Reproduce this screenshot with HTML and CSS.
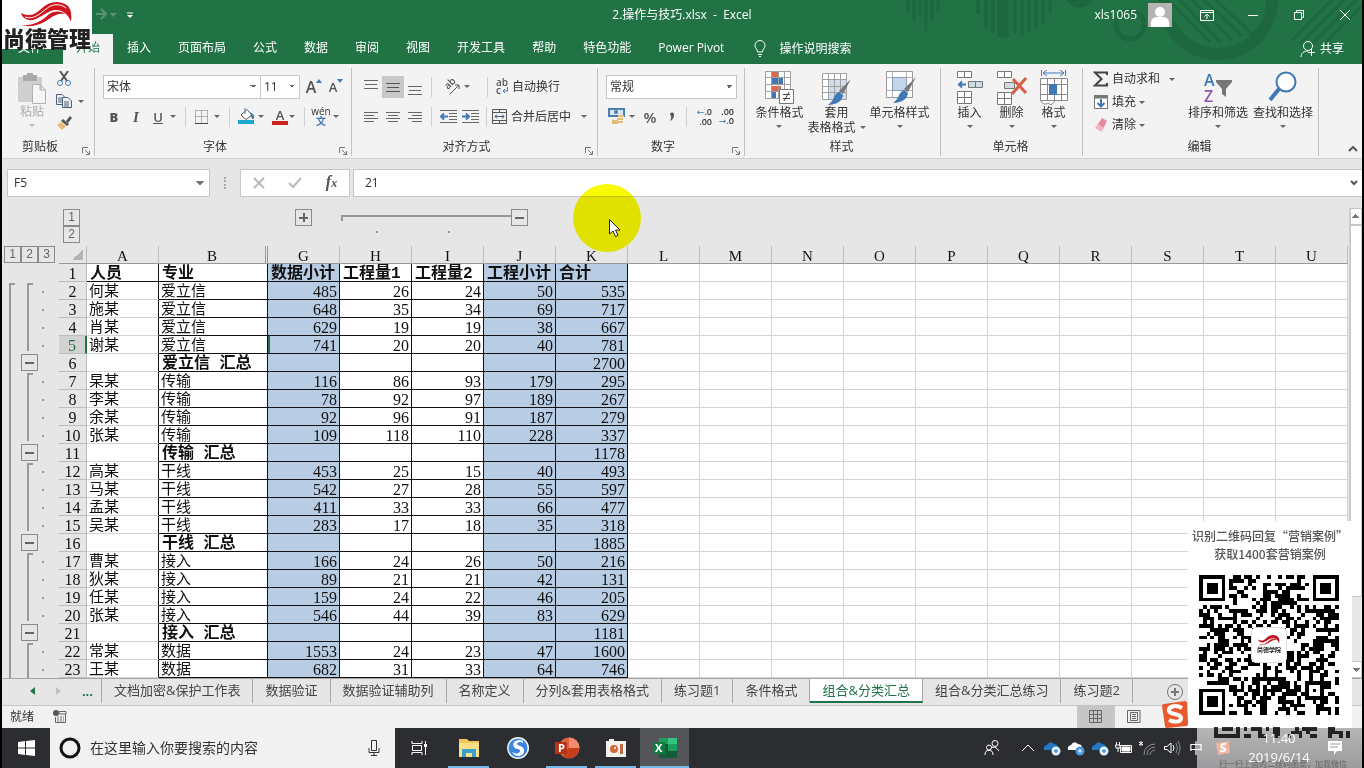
FILE: index.html
```
<!DOCTYPE html>
<html lang="zh-CN">
<head>
    <meta charset="UTF-8">
    <meta name="viewport" content="width=device-width, initial-scale=1.0">
    <title>2.操作与技巧.xlsx - Excel</title>
    <link rel="stylesheet" href="styles.css">
</head>
<body>
    <!-- Title bar and ribbon tabs -->
    <header class="top">
        <svg class="top-pattern" width="560" height="64" viewBox="0 0 560 64" fill="none" stroke="#1d683f">
            <path d="M106 0V14M112 0V22M118 0V16M124 0V31M130 0V22M136 0V12" stroke-width="3"/>
            <path d="M176 0V14M184 0V28M191 0V33" stroke-width="4"/>
            <path d="M201 0V37" stroke-width="11"/>
            <path d="M213 0V34M220 0V36M227 0V32M234 0V29M241 0V24M248 0V14" stroke-width="3"/>
            <path d="M264 0Q277 15 291 0Z" fill="#1d683f"/>
            <circle cx="328" cy="25" r="14" stroke-width="5"/>
            <circle cx="416" cy="0" r="54" stroke-width="12"/>
            <path d="M370 4L408 42M378 0L418 42M390 0L430 40M402 0L440 36M414 0L450 34" stroke-width="3"/>
            <path d="M490 40L530 0M498 44L542 0M510 44L554 0M522 44L560 6" stroke-width="3"/>
        </svg>

        <div class="titlebar">
            <div class="quick-access">
                <svg width="24" height="16" viewBox="0 0 24 16" fill="none" stroke="#5b9673" stroke-width="2"><path d="M0 7H9M5 2L10 7L5 12"/><path d="M14 6H21L17 10Z" fill="#5b9673" stroke="none"/></svg>
                <svg width="12" height="16" viewBox="0 0 12 16"><path d="M3 6H9" stroke="#fff"/><path d="M3 8H9L6 11Z" fill="#fff"/></svg>
            </div>
            <div class="title">2.操作与技巧.xlsx &nbsp;- &nbsp;Excel</div>
            <div class="window-tools">
                <span class="account">xls1065</span>
                <svg width="24" height="24" viewBox="0 0 24 24"><path d="M0 0H24V24H0Z" fill="#b5b3b4"/><circle cx="12" cy="9" r="5" fill="#fff"/><path d="M3 24V20Q3 14 9 14H15Q21 14 21 20V24Z" fill="#fff"/></svg>
                <button class="win-btn first" aria-label="功能区显示选项"><svg width="14" height="12" viewBox="0 0 14 12" fill="none" stroke="#fff"><path d="M.5 1.5H13.5V11.5H.5ZM.5 3.5H13.5M7 10V5M4.500 7.500L7 5L9.500 7.500"/></svg></button>
                <button class="win-btn" aria-label="最小化"><svg width="12" height="12"><path d="M1 6.500H11" stroke="#fff"/></svg></button>
                <button class="win-btn" aria-label="还原"><svg width="12" height="12" fill="none" stroke="#fff"><path d="M1.500 3.500H8.500V10.500H1.500ZM3.500 3V1.500H10.500V8.500H9"/></svg></button>
                <button class="win-btn" aria-label="关闭"><svg width="12" height="12" stroke="#fff"><path d="M1 1L11 11M11 1L1 11"/></svg></button>
            </div>
        </div>

        <nav class="ribbon-tabs">
            <a href="#" class="file">文件</a>
            <a href="#" class="active">开始</a>
            <a href="#">插入</a>
            <a href="#">页面布局</a>
            <a href="#">公式</a>
            <a href="#">数据</a>
            <a href="#">审阅</a>
            <a href="#">视图</a>
            <a href="#">开发工具</a>
            <a href="#">帮助</a>
            <a href="#">特色功能</a>
            <a href="#">Power Pivot</a>
            <a href="#" class="tell-me"><svg width="14" height="18" viewBox="0 0 14 18" fill="none" stroke="#fff"><path d="M4.500 12C4.500 9 2 8.500 2 5.500A5 5 0 0 1 12 5.500C12 8.500 9.500 9 9.500 12ZM5 14.500H9M6 16.500H8"/></svg>操作说明搜索</a>
            <a href="#" class="share"><svg width="16" height="18" viewBox="0 0 16 18" fill="none" stroke="#fff"><circle cx="8" cy="6" r="4.500"/><path d="M1 17C1 13 4 11 8 11M11.500 9V16M8 12.500H15"/></svg>共享</a>
        </nav>
    </header>

    <!-- Ribbon -->
    <section class="ribbon">
        <div class="group clipboard">
            <div class="group-body">
                <button class="big paste"><svg width="30" height="32" viewBox="0 0 30 32"><path d="M1 4H25V29H1Z" fill="#cfcfcf"/><path d="M6 2H20V8H6Z" fill="#a9a9a9"/><path d="M10 0H16V3H10Z" fill="#a9a9a9"/><path d="M15.500 11.500H23L28.500 17V30.500H15.500ZM23 11.500V17H28.500" fill="#f6f6f6" stroke="#b0b0b0"/></svg><span>粘贴</span><i class="caret"></i></button>
                <div class="stack">
                    <button class="tool" aria-label="剪切"><svg width="16" height="16" viewBox="0 0 16 16" fill="none"><path d="M4 0L11 10M12 0L5 10" stroke="#555" stroke-width="2"/><circle cx="4" cy="12" r="2.500" stroke="#3f78b5"/><circle cx="12" cy="12" r="2.500" stroke="#3f78b5"/></svg></button>
                    <button class="tool wide" aria-label="复制"><svg width="16" height="14" viewBox="0 0 16 14" fill="#f3f3f3" stroke="#4b6078"><path d="M.5.5H6L8.500 3V10.500H.5ZM2 4H6M2 6H6M2 8H6"/><path d="M6.500 3.500H12L15.500 7V13.500H6.500ZM8 8H13M8 10H13M8 12H13"/></svg><i class="caret"></i></button>
                    <button class="tool" aria-label="格式刷"><svg width="17" height="15" viewBox="0 0 17 15"><path d="M10 5L14 0L16 2L12 7Z" fill="#555"/><path d="M7 3L13 8L11 10L5 5Z" fill="#555"/><path d="M5 6L10 10L6 14L1 9Z" fill="#e6bd78"/></svg></button>
                </div>
            </div>
            <div class="group-label">剪贴板<svg class="launcher" width="8" height="8"><path d="M.5 6V.5H6M3 3L7 7M7.500 4V7.500H4" fill="none" stroke="#777"/></svg></div>
        </div>

        <div class="group font">
            <div class="group-body rows">
                <div class="line">
                    <select class="font-name" aria-label="字体"><option>宋体</option></select>
                    <select class="font-size" aria-label="字号"><option>11</option></select>
                    <button class="tool glyph grow" aria-label="增大字号">A<svg width="6" height="4"><path d="M0 4L3 0L6 4Z" fill="#3f78b5"/></svg></button>
                    <button class="tool glyph grow small" aria-label="减小字号">A<svg width="6" height="4"><path d="M0 0H6L3 4Z" fill="#3f78b5"/></svg></button>
                </div>
                <div class="line">
                    <button class="tool glyph"><b>B</b></button>
                    <button class="tool glyph italic">I</button>
                    <button class="tool glyph"><u>U</u></button><i class="caret"></i>
                    <span class="sep"></span>
                    <button class="tool" aria-label="边框"><svg width="14" height="14" fill="none" stroke="#777" stroke-dasharray="1 1"><path d="M.5.5V13M6.500.5V13M12.500.5V13M.5.5H13M.5 6.500H13"/><path d="M0 13.500H13" stroke="#444" stroke-dasharray="none"/></svg></button><i class="caret"></i>
                    <span class="sep"></span>
                    <button class="tool" aria-label="填充颜色"><svg width="17" height="17" viewBox="0 0 17 17"><path d="M3 7L9 1.500L14 7L8 11.500Z" fill="#fff" stroke="#555"/><path d="M7 0V6M12 5Q17 6 15 11Q13 9 13 6" stroke="#3f78b5" fill="#3f78b5"/><path d="M0 12H16V16H0Z" fill="#1ba8d0"/></svg></button><i class="caret"></i>
                    <button class="tool glyph font-color" aria-label="字体颜色">A</button><i class="caret"></i>
                    <span class="sep"></span>
                    <button class="tool phonetic"><span>wén</span><b>文</b></button><i class="caret"></i>
                </div>
            </div>
            <div class="group-label">字体<svg class="launcher" width="8" height="8"><path d="M.5 6V.5H6M3 3L7 7M7.500 4V7.500H4" fill="none" stroke="#777"/></svg></div>
        </div>

        <div class="group align">
            <div class="group-body rows">
                <div class="line">
                    <button class="tool" aria-label="顶端对齐"><svg width="14" height="16" stroke="#666"><path d="M0 1.500H14M1 5.500H13M0 9.500H14"/></svg></button>
                    <button class="tool on" aria-label="垂直居中"><svg width="14" height="16" stroke="#555"><path d="M0 4.500H14M1 8.500H13M0 12.500H14"/></svg></button>
                    <button class="tool" aria-label="底端对齐"><svg width="14" height="16" stroke="#666"><path d="M0 7.500H14M1 11.500H13M0 15.500H14"/></svg></button>
                    <span class="sep"></span>
                    <button class="tool turn" aria-label="方向"><svg width="18" height="16" viewBox="0 0 18 16" fill="none" stroke="#555"><text font-size="10" font-weight="600" fill="#555" stroke="none" transform="translate(5 11) rotate(-45)">ab</text><path d="M7 15L16 6M12 6H16V10"/></svg></button><i class="caret"></i>
                    <span class="sep after-turn"></span>
                    <button class="labelled"><svg width="14" height="18" viewBox="0 0 14 18"><text x="1" y="8" font-size="10" font-weight="600" fill="#555">ab</text><text x="1" y="16" font-size="10" font-weight="600" fill="#555">c</text><path d="M12.500 9V13H8M10 11L8 13L10 15" fill="none" stroke="#3f78b5"/></svg>自动换行</button>
                </div>
                <div class="line">
                    <button class="tool" aria-label="左对齐"><svg width="14" height="12" stroke="#666"><path d="M0 1.500H14M0 4.500H10M0 7.500H14M0 10.500H10"/></svg></button>
                    <button class="tool" aria-label="居中"><svg width="14" height="12" stroke="#666"><path d="M0 1.500H14M2 4.500H12M0 7.500H14M2 10.500H12"/></svg></button>
                    <button class="tool" aria-label="右对齐"><svg width="14" height="12" stroke="#666"><path d="M0 1.500H14M4 4.500H14M0 7.500H14M4 10.500H14"/></svg></button>
                    <span class="sep"></span>
                    <button class="tool" aria-label="减少缩进"><svg width="17" height="13" fill="none" stroke="#666"><path d="M0 .5H17M9 3.500H17M9 6.500H17M9 9.500H17M0 12.500H17"/><path d="M8 6.500H1M4 3.500L1 6.500L4 9.500" stroke="#3f78b5" stroke-width="2"/></svg></button>
                    <button class="tool" aria-label="增加缩进"><svg width="17" height="13" fill="none" stroke="#666"><path d="M0 .5H17M9 3.500H17M9 6.500H17M9 9.500H17M0 12.500H17"/><path d="M0 6.500H7M4 3.500L7 6.500L4 9.500" stroke="#3f78b5" stroke-width="2"/></svg></button>
                    <span class="sep"></span>
                    <button class="labelled"><svg width="16" height="16" fill="none" stroke="#555"><path d="M.5.5H14.500V14.500H.5ZM.5 3.500H14.500M.5 11.500H14.500M7.500.5V3.500M7.500 11.500V14.500"/><path d="M3 7.500H12M5 5.500L3 7.500L5 9.500M10 5.500L12 7.500L10 9.500" stroke="#41566d"/></svg>合并后居中</button><i class="caret far"></i>
                </div>
            </div>
            <div class="group-label">对齐方式<svg class="launcher" width="8" height="8"><path d="M.5 6V.5H6M3 3L7 7M7.500 4V7.500H4" fill="none" stroke="#777"/></svg></div>
        </div>

        <div class="group number">
            <div class="group-body rows">
                <div class="line">
                    <select class="format" aria-label="数字格式"><option>常规</option></select>
                </div>
                <div class="line">
                    <button class="tool" aria-label="会计数字格式"><svg width="18" height="17" viewBox="0 0 18 17"><path d="M1 1H16V8H1Z" fill="#d8e7f3" stroke="#4a7fae" stroke-width="2"/><circle cx="8" cy="4" r="2" fill="#4a7fae"/><path d="M10 7H16V9H10ZM9 10H15V12H9ZM4 12H10V16H4ZM10 13H15V15H10Z" fill="#e5bb72"/></svg></button><i class="caret"></i>
                    <button class="tool glyph percent">%</button>
                    <button class="tool glyph" aria-label="千位分隔样式"><svg width="6" height="10"><path d="M1 2A2 2 0 1 1 5 3Q5 7 1 9Q3 6 2 4Z" fill="#555"/></svg></button>
                    <span class="sep tight"></span>
                    <button class="tool decimals"><span><em>←</em>.0</span><span>.00</span></button>
                    <button class="tool decimals"><span>.00</span><span><em>→</em>.0</span></button>
                </div>
            </div>
            <div class="group-label">数字<svg class="launcher" width="8" height="8"><path d="M.5 6V.5H6M3 3L7 7M7.500 4V7.500H4" fill="none" stroke="#777"/></svg></div>
        </div>

        <div class="group styles">
            <div class="group-body">
                <button class="big"><svg width="32" height="36" viewBox="0 0 32 36"><path d="M2 1H28V29H2Z" fill="#fff"/><path d="M9 1H15V7H9Z" fill="#d9694a"/><path d="M9 8H20V14H9Z" fill="#3f78b5"/><path d="M9 16H18V21H9Z" fill="#d9694a"/><path d="M9 22H13V28H9Z" fill="#3f78b5"/><path d="M2.500 1.500H27.500V28.500H2.500ZM2.500 7.500H27.500M2.500 14.500H27.500M2.500 21.500H27.500M8.500 1.500V28.500M15.500 1.500V28.500M21.500 1.500V28.500" fill="none" stroke="#a0a0a0"/><path d="M16.500 19.500H30.500V33.500H16.500Z" fill="#fff" stroke="#777"/><path d="M20 24.500H27M20 28.500H27M26 22L21 31" stroke="#444"/></svg><span>条件格式</span><i class="caret"></i></button>
                <button class="big"><svg width="32" height="36" viewBox="0 0 32 36"><path d="M2.500 3.500H26.500V29.500H2.500Z" fill="#fff"/><path d="M9 10H26V29H9Z" fill="#cfdeea"/><path d="M2.500 3.500H26.500V29.500H2.500ZM2.500 9.500H26.500M2.500 16.500H26.500M2.500 22.500H26.500M8.500 3.500V29.500M14.500 3.500V29.500M20.500 3.500V29.500" fill="none" stroke="#a0a0a0"/><path d="M31 9L23 24L19 21L28 12Z" fill="#777"/><path d="M19 22L23 25Q22 34 8 35Q13 31 14 27Q16 23 19 22Z" fill="#3f78b5"/></svg><span>套用<br>表格格式<i class="caret"></i></span></button>
                <button class="big"><svg width="32" height="36" viewBox="0 0 32 36"><path d="M2.500 1.500H28.500V27.500H2.500Z" fill="#fff" stroke="#999"/><path d="M2.500 7.500H28.500M2.500 20.500H28.500M8.500 1.500V27.500M22.500 1.500V27.500" stroke="#b5b5b5"/><path d="M8.500 7.500H22.500V20.500H8.500Z" fill="#c5d5ea" stroke="#8d9db5"/><path d="M32 7L24 22L20 19L29 10Z" fill="#777"/><path d="M20 20L24 23Q23 32 9 33Q14 29 15 25Q17 21 20 20Z" fill="#3f78b5"/></svg><span>单元格样式</span><i class="caret"></i></button>
            </div>
            <div class="group-label">样式</div>
        </div>

        <div class="group cells">
            <div class="group-body">
                <button class="big"><svg width="28" height="36" viewBox="0 0 28 36" fill="#fff" stroke="#777"><path d="M1.500 1.500H15.500V7.500H1.500ZM8.500 1.500V7.500"/><path d="M12.500 11.500H26.500V17.500H12.500ZM19.500 11.500V17.500" fill="#cfdce6"/><path d="M1.500 21.500H15.500V33.500H1.500ZM8.500 21.500V33.500M1.500 27.500H15.500"/><path d="M10 14.500H3M6 11.500L3 14.500L6 17.500" fill="none" stroke="#3f78b5" stroke-width="2"/></svg><span>插入</span><i class="caret"></i></button>
                <button class="big"><svg width="32" height="36" viewBox="0 0 32 36" fill="#fff" stroke="#777"><path d="M1.500 1.500H15.500V7.500H1.500ZM8.500 1.500V7.500"/><path d="M8.500 12.500H18.500V18.500H8.500Z" fill="#cfdce6"/><path d="M1.500 22.500H15.500V34.500H1.500ZM8.500 22.500V34.500M1.500 28.500H15.500"/><path d="M17 9L30 23M30 8L16 24" stroke="#d75f45" stroke-width="3"/></svg><span>删除</span><i class="caret"></i></button>
                <button class="big"><svg width="30" height="36" viewBox="0 0 30 36" fill="#fff" stroke="#888"><path d="M1.500 8.500H28.500V30.500H1.500Z"/><path d="M8.500 8.500V30.500M15.500 8.500V30.500M22.500 8.500V30.500M1.500 14.500H28.500M1.500 24.500H28.500M2 31Q5 36 9 33L12 35L16 31"/><path d="M10 14H18V25H10Z" fill="#3f78b5" stroke="none"/><path d="M2.500 0V6M26.500 0V6M4 3H25M8 0L4 3L8 6M21 0L25 3L21 6" fill="none" stroke="#3f78b5"/></svg><span>格式</span><i class="caret"></i></button>
            </div>
            <div class="group-label">单元格</div>
        </div>

        <div class="group editing">
            <div class="group-body">
                <div class="stack text">
                    <button class="labelled sum"><svg width="16" height="16"><path d="M14 4V1.500H2L8.500 8L2 14.500H14V12" fill="none" stroke="#444" stroke-width="2"/></svg>自动求和<i class="caret"></i></button>
                    <button class="labelled"><svg width="16" height="16" fill="none"><path d="M1.500 1.500H14.500V14.500H1.500Z" fill="#fff" stroke="#777"/><path d="M1 3H15" stroke="#777" stroke-width="3"/><path d="M8 5V12M4.500 9L8 12.500L11.500 9" stroke="#3f78b5" stroke-width="2"/></svg>填充<i class="caret"></i></button>
                    <button class="labelled"><svg width="16" height="14"><path d="M9 0L14 3L9 13L3 9Z" fill="#e58b9d"/><path d="M5 6L11 10L8 14L2 10Z" fill="#f0b5bf"/></svg>清除<i class="caret"></i></button>
                </div>
                <button class="big"><svg width="30" height="36" viewBox="0 0 30 36"><text x="1" y="16" font-size="16" font-weight="600" fill="#3f78b5">A</text><text x="1" y="32" font-size="16" font-weight="600" fill="#9454a8">Z</text><path d="M13 10H29V12L23 19V27L19 24V19L13 12Z" fill="#777"/></svg><span>排序和筛选</span><i class="caret"></i></button>
                <button class="big"><svg width="30" height="36" viewBox="0 0 30 36" fill="none" stroke="#3f78b5"><circle cx="18" cy="12" r="9.500" stroke-width="2" fill="#fff"/><path d="M11 19L2 30" stroke-width="4"/></svg><span>查找和选择</span><i class="caret"></i></button>
            </div>
            <div class="group-label">编辑</div>
        </div>
        <button class="collapse" aria-label="折叠功能区"><svg width="10" height="6" fill="none" stroke="#555" stroke-width="2"><path d="M1 5L5 1L9 5"/></svg></button>
    </section>

    <!-- Formula bar -->
    <section class="formula-bar">
        <select class="name-box" aria-label="名称框"><option>F5</option></select>
        <span class="grip"></span>
        <div class="formula-buttons">
            <svg width="12" height="12" stroke="#b9b9b9" stroke-width="2"><path d="M1 1L11 11M11 1L1 11"/></svg>
            <svg width="14" height="12" fill="none" stroke="#b9b9b9" stroke-width="2"><path d="M1 6L5 10L13 1"/></svg>
            <span class="fx">f<small>x</small></span>
        </div>
        <div class="formula">
            <input aria-label="编辑栏" value="21">
            <svg width="8" height="6" fill="none" stroke="#555" stroke-width="2"><path d="M1 1L4 4L7 1"/></svg>
        </div>
    </section>

    <!-- Worksheet -->
    <main class="sheet">
        <div class="sheet-area">
            <div class="col-outline">
                <div class="levels"><button>1</button><button>2</button></div>
                <button class="toggle plus" aria-label="展开"></button>
                <div class="bracket"><i></i><i></i></div>
                <button class="toggle minus" aria-label="折叠"></button>
            </div>
            <div class="grid-wrap">
                <div class="row-outline">
                    <div class="levels"><button>1</button><button>2</button><button>3</button></div>
                    <div class="outline-body">
                        <div class="level-one"></div>
                        <div class="level-two" id="levelTwo"></div>
                        <div class="dots" id="dots"></div>
                    </div>
                </div>
                <table class="cells-table">
                    <colgroup><col class="c-row"><col><col class="c-b"></colgroup>
                    <thead id="head"></thead>
                    <tbody id="rows"></tbody>
                </table>
            </div>
        </div>
        <div class="scrollbar">
            <span class="up"></span>
            <span class="thumb"></span>
            <span class="down"></span>
        </div>
    </main>

    <!-- Sheet tabs -->
    <nav class="sheet-tabs">
        <span class="tab-nav"><i class="left"></i><i class="right"></i><b>...</b></span>
        <a href="#">文档加密&amp;保护工作表</a>
        <a href="#">数据验证</a>
        <a href="#">数据验证辅助列</a>
        <a href="#">名称定义</a>
        <a href="#">分列&amp;套用表格格式</a>
        <a href="#">练习题1</a>
        <a href="#">条件格式</a>
        <a href="#" class="active">组合&amp;分类汇总</a>
        <a href="#">组合&amp;分类汇总练习</a>
        <a href="#">练习题2</a>
        <button class="add-sheet" aria-label="新工作表"><svg width="16" height="16" fill="none" stroke="#777"><circle cx="8" cy="8" r="7.500"/><path d="M8 4V12M4 8H12" stroke-width="2"/></svg></button>
    </nav>

    <div class="status-bar">
        <span>就绪</span>
        <svg width="14" height="14" viewBox="0 0 14 14"><circle cx="3" cy="3" r="3" fill="#555"/><path d="M6 1.500H13V4H6ZM2.500 7V12.500H12.500V4" fill="none" stroke="#666"/><path d="M4 7H11M4 9H11M4 11H11" stroke="#777" stroke-dasharray="2 1"/></svg>
        <div class="views">
            <button class="on" aria-label="普通"><svg width="14" height="14" fill="none" stroke="#666"><path d="M.5.5H12.500V12.500H.5ZM4.500.5V12.500M8.500.5V12.500M.5 4.500H12.500M.5 8.500H12.500"/></svg></button>
            <button aria-label="页面布局"><svg width="14" height="14" fill="none" stroke="#666"><path d="M.5.5H13V12.500H.5ZM3.500 2.500H10.500V10.500H3.500ZM5 4.500H9M5 6.500H9M5 8.500H9"/></svg></button>
        </div>
    </div>

    <!-- Windows taskbar -->
    <footer class="taskbar">
        <button class="start" aria-label="开始"><svg width="17" height="16" fill="#fff"><path d="M0 2L7 1V7.500H0ZM8 1L17 0V7.500H8ZM0 8.500H7V15L0 14ZM8 8.500H17V16L8 15Z"/></svg></button>
        <label class="search">
            <svg width="22" height="22" fill="none" stroke="#111" stroke-width="3"><circle cx="11" cy="11" r="9"/></svg>
            <input type="text" placeholder="在这里输入你要搜索的内容" aria-label="搜索">
            <svg width="12" height="18" fill="none" stroke="#333"><path d="M3.500 1.500H8.500V11.500H3.500ZM1 9V13.500H11V9M6 14V17M3 16.500H9"/></svg>
        </label>
        <button class="task" aria-label="任务视图"><svg width="18" height="16" fill="none" stroke="#fff"><path d="M1 1V3.500H11V1M1 15V12.500H11V15M1.500 5.500H10.500V10.500H1.500ZM14.500 1V15"/><path d="M13 4H16V7H13Z" fill="#fff" stroke="none"/></svg></button>
        <button class="task open" aria-label="文件资源管理器"><svg width="22" height="20"><path d="M1 1H9L11 3H21V19H1Z" fill="#f0c85a"/><path d="M1 5H21V19H1Z" fill="#fbdf86"/><path d="M4 11H18V19H14V15H8V19H4Z" fill="#38a2cf"/></svg></button>
        <button class="task" aria-label="搜狗浏览器"><svg width="24" height="24"><circle cx="12" cy="12" r="11" fill="#f5f9fd"/><circle cx="12" cy="12" r="9.500" fill="#3d86dc"/><path d="M17 5C11 2 5 7 8 11C10 14 14 12 14 15C14 18 9 18 6 16C10 23 19 20 18 14C17 9 11 10 11 8C11 6 14 5 17 7Z" fill="#fff"/></svg></button>
        <button class="task open" aria-label="PowerPoint"><svg width="26" height="24"><circle cx="15" cy="12" r="10.500" fill="#e2603c"/><path d="M15 1.500A10.500 10.500 0 0 1 25.500 12H15Z" fill="#f18d6e"/><path d="M15 12H25A10 10 0 0 1 9 20Z" fill="#c43e1c"/><path d="M1 6H13V18H1Z" fill="#b83518"/><text x="4" y="16" font-size="11" font-weight="700" fill="#fff">P</text></svg></button>
        <button class="task open" aria-label="录屏"><svg width="22" height="20"><path d="M1 3H4V1H9V3H21V19H1Z" fill="#f3f1ed"/><circle cx="9" cy="11" r="4" fill="#d56835"/><circle cx="10" cy="10" r="1" fill="#fff"/><path d="M15 6H18V16H15Z" fill="#b96c45"/></svg></button>
        <button class="task open current" aria-label="Excel"><svg width="26" height="24"><path d="M7 2H25V22H7Z" fill="#1f9d5c"/><path d="M16 2H25V8H16Z" fill="#33c481"/><path d="M7 8H16V15H7ZM16 15H25V22H7V15Z" fill="#155c38"/><path d="M1 6H13V18H1Z" fill="#107c41"/><text x="3" y="16" font-size="11" font-weight="700" fill="#fff">X</text></svg></button>

        <div class="tray">
            <svg class="people" width="16" height="16" fill="none" stroke="#fff"><circle cx="11" cy="3.500" r="3"/><circle cx="5" cy="7.500" r="2.500"/><path d="M1 15Q1 10 5 10.500Q9 10 9 15M7 8Q11 5 15 11"/></svg>
            <svg width="24" height="16" fill="none" stroke="#fff"><path d="M6 11L12 5L18 11"/></svg>
            <svg width="24" height="16"><path d="M4 10Q3 6 7 5Q10 0 14 4Q19 4 18 10Z" fill="#2378c4"/><circle cx="16" cy="11" r="4.500" fill="#dceeff"/><path d="M14 11H18M16 9V13" stroke="#2378c4"/></svg>
            <svg width="24" height="16"><path d="M4 10Q3 6 7 5Q10 0 14 4Q19 4 18 10Z" fill="#fff"/><circle cx="16" cy="11" r="4.500" fill="#4b9ae0"/><path d="M14 11H18M16 9V13" stroke="#fff"/></svg>
            <svg width="24" height="16"><path d="M4 10Q3 6 7 5Q10 0 14 4Q19 4 18 10Z" fill="#2378c4"/><circle cx="16" cy="11" r="4.500" fill="#dceeff"/><path d="M14 11H18M16 9V13" stroke="#2378c4"/></svg>
            <svg width="24" height="16" fill="none" stroke="#fff"><path d="M8.500 5.500H19.500V12.500H8.500Z"/><path d="M10 7H18V11H10Z" fill="#fff"/><path d="M4.500 2V5M7.500 2V5M3.500 5H8V8H4ZM6 8V12"/></svg>
            <svg width="24" height="16" fill="none" stroke="#8a8c8f"><path d="M8 15Q8 5 19 4M11 15Q11 8 19 7M14 15Q14 11 19 10"/><path d="M5 1V6M3 2L7 5M7 2L3 5" stroke="#fff"/></svg>
            <svg width="24" height="16" fill="none" stroke="#fff"><path d="M4.500 6.500H7L11 3V13L7 9.500H4.500ZM13 5Q15 8 13 11"/><path d="M16 3Q19 8 16 13M18 1Q22 8 18 15" stroke="#8a8c8f"/></svg>
            <span class="ime">中</span>
        </div>
        <div class="clock">
            <svg width="16" height="16"><path d="M1 3L14 1L15 13L3 15Z" fill="#edb5a2"/><path d="M11 4C6 3 5 7 8 8C12 9 11 12 5 11" fill="none" stroke="#fff" stroke-width="2"/></svg>
            <div class="time">11:40<br>2019/6/14</div>
            <svg width="17" height="16"><path d="M1 1H15V11H10L7 15V11H1Z" fill="#fff"/><path d="M3 4H13M3 7H11" stroke="#999"/></svg>
            <p>扫一扫上面的二维码图案，加我微信</p>
        </div>
    </footer>

    <!-- Things floating above the window -->
    <div class="brand">
        <svg width="52" height="26" viewBox="0 0 52 26" fill="#cf1620"><path d="M0 12C8 16 14 14 20 8C27 1 36 -1 44 3C50 6 51 12 50 21C47 13 42 9 35 9C27 9 20 17 12 19C5 20 1 16 0 12Z"/><path d="M1 24C10 25 20 21 27 14C33 9 40 10 45 13C38 12 33 14 28 18C20 24 8 27 1 24Z"/><path d="M4 16C12 19 19 13 25 8C31 3 39 2 45 7" fill="none" stroke="#fff"/></svg>
        <strong>尚德管理</strong>
    </div>
    <svg class="sogou" width="28" height="28"><path d="M1 5Q1 3 3 3L24 0Q26 0 26 2L27 23Q27 25 25 25L6 27Q4 27 4 25Z" fill="#e8592f"/><path d="M21 7C14 3 7 6 8 10C9 14 20 12 20 17C20 22 12 21 8 19" fill="none" stroke="#fff" stroke-width="4"/></svg>
    <aside class="qr-card">
        <p>识别二维码回复“营销案例”<br>获取1400套营销案例</p>
        <div class="qr-box">
            <svg id="qr" class="qr" width="140" height="140" viewBox="0 0 37 37" shape-rendering="crispEdges"></svg>
            <div class="qr-logo">
                <svg width="22" height="12" viewBox="0 0 52 26" fill="#c41420"><path d="M0 12C8 16 14 14 20 8C27 1 36 -1 44 3C50 6 51 12 50 21C47 13 42 9 35 9C27 9 20 17 12 19C5 20 1 16 0 12Z"/><path d="M1 24C10 25 20 21 27 14C33 9 40 10 45 13C38 12 33 14 28 18C20 24 8 27 1 24Z"/></svg>
                <b>尚德学院</b>
            </div>
        </div>
    </aside>
    <svg id="qrStrip" class="qr-strip" width="136" height="11" viewBox="0 34 37 3" shape-rendering="crispEdges"></svg>
    <div class="spotlight"></div>
    <svg class="pointer" width="14" height="20"><path d="M1.500 1.500V16L5 13L7.500 18.500L10 17.500L7.500 12H12Z" fill="#fff" stroke="#222"/></svg>

    <script src="script.js"></script>
</body>
</html>
```
FILE: styles.css
```
* {
    margin: 0;
    padding: 0;
    box-sizing: border-box;
}
body {
    height: 100vh;
    display: flex;
    flex-direction: column;
    overflow: hidden;
    position: relative;
    border: solid #000;
    border-width: 0 2px;
    background: #e6e6e6;
    color: #333;
    font: 12px/16px "Open Sans", "Noto Sans CJK SC", sans-serif;
}
button, select, input {
    font: inherit;
    color: inherit;
    border: 0;
    border-radius: 0;
    background: none;
}
a {
    color: inherit;
    text-decoration: none;
    white-space: nowrap;
}
svg { flex-shrink: 0; }
select {
    appearance: none;
    border: 1px solid #c6c6c6;
    background: linear-gradient(45deg, transparent 50%, #666 50%) right 7px center / 3px 3px no-repeat,
                linear-gradient(-45deg, transparent 50%, #666 50%) right 4px center / 3px 3px no-repeat,
                #fff;
}
.caret {
    flex-shrink: 0;
    display: inline-block;
    border: solid transparent;
    border-width: 3px 3px 0;
    border-top-color: #666;
}

/* Title bar */
.top {
    position: relative;
    height: 64px;
    flex-shrink: 0;
    background: #217346;
    color: #fff;
    display: flex;
    flex-direction: column;
    justify-content: space-between;
    overflow: hidden;
}
.top-pattern {
    position: absolute;
    top: 0;
    right: 0;
}
.titlebar {
    position: relative;
    height: 30px;
    display: grid;
    grid-template-columns: 1fr auto 1fr;
    align-items: center;
}
.quick-access {
    display: flex;
    gap: 4px;
    padding-left: 94px;
}
.window-tools {
    display: flex;
    align-items: center;
    justify-content: flex-end;
    margin-right: -6px;
}
.account { margin-right: 11px; }
.win-btn {
    width: 46px;
    height: 28px;
    display: flex;
    align-items: center;
    justify-content: center;
}
.win-btn.first { margin-left: 12px; }
.ribbon-tabs {
    position: relative;
    display: flex;
    gap: 1px;
    height: 30px;
    line-height: 28px;
}
.ribbon-tabs a { padding: 0 13px; }
.ribbon-tabs .file { width: 60px; padding-left: 16px; }
.ribbon-tabs .active {
    background: #f3f3f3;
    color: #217346;
}
.ribbon-tabs .tell-me, .ribbon-tabs .share {
    display: flex;
    align-items: center;
    gap: 12px;
}
.ribbon-tabs .tell-me { padding-left: 15px; }
.ribbon-tabs .share {
    margin-left: auto;
    gap: 4px;
    padding-right: 18px;
}

/* Ribbon */
.ribbon {
    height: 95px;
    flex-shrink: 0;
    display: flex;
    padding: 4px 0 2px;
    background: #f3f3f3;
    border-bottom: 1px solid #cfcfcf;
}
.group {
    display: flex;
    flex-direction: column;
    flex-shrink: 0;
    border-right: 1px solid #c2c2c2;
    white-space: nowrap;
}
.clipboard { width: 93px; }
.font { width: 257px; }
.align { width: 246px; }
.number { width: 147px; }
.styles { width: 196px; }
.cells { width: 142px; }
.editing { width: 236px; }
.group-body {
    flex: 1;
    display: flex;
    justify-content: center;
}
.group-body.rows {
    flex-direction: column;
    justify-content: flex-start;
    gap: 5px;
    padding: 6px 0 0 8px;
}
.line {
    display: flex;
    align-items: center;
    height: 25px;
}
.group-label {
    position: relative;
    height: 17px;
    text-align: center;
    padding-right: 16px;
}
.styles .group-label, .cells .group-label, .editing .group-label { padding-right: 2px; }
.launcher {
    position: absolute;
    right: 4px;
    bottom: 1px;
}
.tool {
    width: 22px;
    height: 22px;
    flex-shrink: 0;
    display: flex;
    align-items: center;
    justify-content: center;
}
.tool.on { background: #c8c8c8; }
.tool.wide {
    width: 36px;
    justify-content: flex-start;
    gap: 6px;
    padding-left: 3px;
}
.glyph {
    font-size: 13px;
    font-weight: 600;
    color: #555;
}
.italic { font: italic bold 15px/16px "Liberation Serif", serif; }
.grow { font-size: 16px; }
.grow svg { align-self: flex-start; margin-top: 3px; }
.grow.small { font-size: 13px; }
.font-name { width: 158px; height: 24px; padding-left: 3px; }
.font-size { width: 39px; height: 24px; padding-left: 3px; border-left: 0; margin-right: 3px; }
.tool + .caret { margin: 0 4px 0 1px; }
.sep {
    width: 1px;
    height: 20px;
    background: #d0d0d0;
    margin: 0 5px;
}
.sep.tight { margin: 0 3px; }
.turn { margin-left: 4px; }
.sep.after-turn { margin: 0 7px 0 13px; }
.font-color {
    height: 17px;
    width: 16px;
    margin-left: 4px;
    border-bottom: 4px solid #c9211e;
}
.phonetic {
    flex-direction: column;
    line-height: 9px;
    font-size: 10px;
}
.phonetic b { line-height: 10px; color: #3f78b5; }
.labelled {
    display: flex;
    align-items: center;
    gap: 3px;
}
.caret.far { margin-left: 10px; }
.format { width: 131px; height: 24px; padding-left: 3px; }
.percent { font-size: 15px; }
.decimals {
    flex-direction: column;
    align-items: flex-end;
    font-size: 9px;
    line-height: 9px;
    font-weight: 600;
}
.decimals em {
    font: 9px/9px "DejaVu Sans", sans-serif;
    color: #3f78b5;
}
.stack {
    display: flex;
    flex-direction: column;
    width: 36px;
}
.stack.text {
    width: 90px;
    gap: 7px;
    padding-top: 3px;
}
.clipboard .group-body { padding-left: 10px; }
.big {
    display: flex;
    flex-direction: column;
    align-items: center;
    padding-top: 2px;
    line-height: 15px;
}
.big svg { margin-bottom: -1px; }
.big > .caret { margin-top: 5px; }
.big span .caret { margin: 0 0 3px 4px; }
.paste { color: #aaa; margin-right: 6px; padding-top: 5px; }
.paste .caret { border-top-color: #bbb; }
.sum .caret { margin-left: 6px; }
.styles .group-body { gap: 4px; }
.cells .big { width: 42px; }
.editing .group-body {
    justify-content: flex-start;
    gap: 5px;
    padding-left: 10px;
}
.collapse {
    margin-left: auto;
    align-self: flex-end;
    padding-right: 4px;
}

/* Formula bar */
.formula-bar {
    height: 49px;
    flex-shrink: 0;
    display: flex;
    align-items: center;
    padding: 0 0 2px 5px;
}
.name-box {
    width: 203px;
    height: 28px;
    padding-left: 6px;
    background: linear-gradient(45deg, transparent 50%, #777 50%) right 9px center / 4px 4px no-repeat,
                linear-gradient(-45deg, transparent 50%, #777 50%) right 5px center / 4px 4px no-repeat,
                #fff;
}
.grip {
    width: 2px;
    height: 12px;
    margin: 0 14px;
    border-left: 2px dotted #aaa;
}
.formula-buttons {
    display: flex;
    align-items: center;
    justify-content: space-around;
    width: 110px;
    height: 28px;
    border: 1px solid #c6c6c6;
    background: #fff;
}
.fx { font: italic bold 16px/20px "Liberation Serif", serif; color: #555; }
.fx small { font-size: 12px; }
.formula {
    flex: 1;
    min-width: 0;
    display: flex;
    align-items: center;
    height: 28px;
    margin-left: 3px;
    padding: 0 4px 0 11px;
    border: 1px solid #c6c6c6;
    border-right: 0;
    background: #fff;
}
.formula input { flex: 1; min-width: 0; }

/* Worksheet */
.sheet {
    flex: 1;
    min-height: 0;
    display: flex;
}
.sheet-area {
    flex: 1;
    min-width: 0;
    overflow: hidden;
    display: flex;
    flex-direction: column;
}
.col-outline {
    height: 38px;
    flex-shrink: 0;
    display: flex;
    padding: 1px 0 0 61px;
}
.levels { display: flex; }
.levels button, .toggle {
    width: 17px;
    height: 17px;
    flex-shrink: 0;
    border: 1px solid #8a8a8a;
    font: 12px/15px "Liberation Sans", sans-serif;
    color: #666;
}
.col-outline .levels { flex-direction: column; }
.toggle {
    display: block;
    background: linear-gradient(#666, #666) center / 9px 2px no-repeat;
}
.toggle.plus {
    margin-left: 215px;
    background: linear-gradient(#666, #666) center / 9px 2px no-repeat, linear-gradient(#666, #666) center / 2px 9px no-repeat;
}
.bracket {
    width: 170px;
    height: 6px;
    margin: 6px 0 0 29px;
    border: solid #999;
    border-width: 2px 0 0 2px;
    display: flex;
    gap: 70px;
    padding-left: 33px;
}
.bracket i { margin-top: 14px; }
.bracket i, .dots i::after {
    content: "";
    width: 2px;
    height: 2px;
    flex-shrink: 0;
    background: #999;
}
.grid-wrap { display: flex; }
.row-outline {
    width: 57px;
    flex-shrink: 0;
    padding-left: 2px;
}
.outline-body {
    display: flex;
    height: 415px;
    padding: 20px 0 0 5px;
}
.level-one {
    width: 6px;
    border: solid #999;
    border-width: 2px 0 0 2px;
}
.level-two { width: 21px; margin-left: 6px; }
.level-two i {
    display: block;
    width: 6px;
    height: 68px;
    margin-left: 6px;
    border: solid #999;
    border-width: 2px 0 0 2px;
}
.level-two .toggle { margin: 3px 0 2px; }
.dots i {
    height: 18px;
    width: 6px;
    display: flex;
    align-items: center;
}
.cells-table {
    width: 1289px;
    flex-shrink: 0;
    table-layout: fixed;
    border-spacing: 0;
    color: #111;
    font: 15px/15px "Liberation Serif", "Noto Sans CJK SC", serif;
}
.c-row { width: 28px; }
.c-b { width: 109px; }
.cells-table th, .cells-table td {
    height: 18px;
    border: solid #d4d4d4;
    border-width: 0 1px 1px 0;
    white-space: nowrap;
    overflow: hidden;
    padding: 2px 2px 0;
    background: #fff;
}
.cells-table th {
    background: #e6e6e6;
    border-color: #bdbdbd;
    font-weight: normal;
    font-size: 16px;
    text-align: center;
}
.cells-table thead th {
    border-bottom-color: #999;
    font-size: 15px;
    line-height: 13px;
    padding-top: 4px;
}
.cells-table thead th:first-child { background: linear-gradient(135deg, transparent 50%, #b4b4b4 50%) right 3px bottom 3px / 11px 11px no-repeat #e6e6e6; }
.cells-table thead th:nth-child(3) { border-right: 3px double #999; }
.cells-table td.box { border-color: #111; }
.cells-table td.name { border-right-color: #111; }
.cells-table td.num {
    text-align: right;
    font-size: 16px;
}
.cells-table td.sum { background: #b8cce4; }
.cells-table td.bold {
    font-family: "Liberation Mono", "Noto Sans CJK SC", monospace;
    font-weight: bold;
    font-size: 16px;
    line-height: 13px;
    padding: 4px 3px 0;
}
.cells-table .picked th {
    background: #d2d2d2;
    color: #217346;
    border-right: 2px solid #217346;
}
.cells-table .picked td.first-sum { box-shadow: inset 2px 0 #2a6b55; }
.scrollbar {
    width: 13px;
    display: flex;
    flex-direction: column;
    align-items: center;
    border-left: 1px solid #cfcfcf;
    background: #e8e8e8;
}
.scrollbar .up, .scrollbar .down {
    width: 12px;
    height: 17px;
    border: 1px solid #c6c6c6;
    background: linear-gradient(45deg, transparent 50%, #777 50%) 1px center / 4px 4px no-repeat, linear-gradient(-45deg, transparent 50%, #777 50%) 5px center / 4px 4px no-repeat, #fff;
}
.scrollbar .up { transform: rotate(180deg); }
.scrollbar .thumb {
    width: 12px;
    height: 372px;
    border: 1px solid #c6c6c6;
    background: #fff;
}
.scrollbar .down { margin-top: auto; }

/* Sheet tabs */
.sheet-tabs {
    height: 28px;
    flex-shrink: 0;
    display: flex;
    align-items: flex-start;
    border-top: 1px solid #a6a6a6;
    border-bottom: 1px solid #c6c6c6;
    font-size: 13px;
    line-height: 22px;
    color: #444;
}
.sheet-tabs a {
    height: 24px;
    padding: 0 12px;
    border-right: 1px solid #a6a6a6;
}
.sheet-tabs .active {
    background: #fff;
    color: #217346;
    border-bottom: 2px solid #217346;
}
.tab-nav {
    width: 100px;
    height: 24px;
    display: flex;
    align-items: center;
    justify-content: flex-end;
    gap: 21px;
    padding-right: 8px;
    border-right: 1px solid #a6a6a6;
    color: #217346;
}
.tab-nav i {
    border: solid transparent;
    border-width: 4px 5px 4px 0;
    border-right-color: #217346;
}
.tab-nav .right { border-width: 4px 0 4px 5px; border-left-color: #c0c0c0; }
.add-sheet { margin: 5px 0 0 34px; height: 16px; }
.status-bar {
    height: 22px;
    flex-shrink: 0;
    display: flex;
    align-items: center;
    gap: 19px;
    padding-left: 8px;
    background: #f1f1f1;
}
.views {
    display: flex;
    margin-left: auto;
    margin-right: 209px;
}
.views button {
    width: 38px;
    height: 22px;
    display: flex;
    align-items: center;
    justify-content: center;
}
.views .on { background: #c6c6c6; }

/* Taskbar */
.taskbar {
    height: 40px;
    flex-shrink: 0;
    display: flex;
    background: #2b2d31;
    color: #fff;
}
.start { width: 48px; display: flex; align-items: center; justify-content: center; }
.search {
    width: 345px;
    display: flex;
    align-items: center;
    gap: 9px;
    padding: 0 15px 0 9px;
    background: #f1f1f1;
    color: #333;
    font-size: 14px;
}
.search input { flex: 1; min-width: 0; }
.search input::placeholder { color: #333; opacity: 1; }
.task {
    width: 49px;
    display: flex;
    align-items: center;
    justify-content: center;
    border: solid transparent;
    border-width: 2px 0;
}
.open {
    width: 41px;
    margin: 0 4px;
    border-bottom-color: #76b9ed;
}
.current { width: 49px; margin: 0; background: #535558; border-top-color: #535558; }
.tray {
    position: relative;
    z-index: 1;
    margin: 0 -6px 0 auto;
    display: flex;
    align-items: center;
}
.people { margin-right: 16px; }
.ime { width: 14px; margin-left: 5px; font-size: 14px; }
.clock {
    position: relative;
    width: 165px;
    padding: 0 18px;
    display: flex;
    align-items: center;
    justify-content: space-between;
    background: linear-gradient(#b5b5b5, #9b9c9e);
}
.time {
    position: relative;
    z-index: 2;
    text-align: center;
    font-size: 13px;
    line-height: 19px;
}
.clock p {
    position: absolute;
    left: 22px;
    bottom: -4px;
    font-size: 8px;
    color: #666;
    white-space: nowrap;
}

/* Overlays */
.brand {
    position: absolute;
    top: 0;
    left: 0;
    width: 90px;
    height: 49px;
    padding-top: 1px;
    background: #fff;
    display: flex;
    flex-direction: column;
    align-items: center;
}
.brand strong {
    font-size: 22px;
    font-weight: 900;
    line-height: 22px;
    color: #222;
    white-space: nowrap;
}
.sogou {
    position: absolute;
    right: 173px;
    bottom: 39px;
}
.qr-card {
    position: absolute;
    right: 10px;
    bottom: 40px;
    width: 164px;
    height: 207px;
    padding: 6px 0 0;
    background: #fff;
    color: #555;
    white-space: nowrap;
}
.qr-card p {
    display: flow-root;
    text-align: center;
    font-family: "Noto Sans CJK SC", sans-serif;
    font-weight: 500;
    line-height: 18px;
    margin-bottom: 12px;
}
.qr-box {
    position: relative;
    width: 140px;
    margin-left: 11px;
}
.qr { display: block; }
.qr-logo {
    position: absolute;
    top: 52px;
    left: 52px;
    width: 36px;
    height: 36px;
    border-radius: 5px;
    border: 1px solid #ddd;
    background: #fff;
    display: flex;
    flex-direction: column;
    align-items: center;
    padding-top: 6px;
}
.qr-logo b { font-size: 6px; line-height: 9px; color: #111; }
.qr-strip {
    position: absolute;
    right: 12px;
    bottom: 30px;
    opacity: 0.8;
}
.spotlight {
    position: absolute;
    top: 184px;
    left: 571px;
    width: 68px;
    height: 68px;
    border-radius: 50%;
    background: #fafa00;
    mix-blend-mode: multiply;
}
.pointer {
    position: absolute;
    top: 218px;
    left: 606px;
}
```
FILE: script.js
```
// row: name, type, G, H, I, J, K  (name is empty on subtotal rows)
const data = [
    ["何某", "爱立信", 485, 26, 24, 50, 535],
    ["施某", "爱立信", 648, 35, 34, 69, 717],
    ["肖某", "爱立信", 629, 19, 19, 38, 667],
    ["谢某", "爱立信", 741, 20, 20, 40, 781],
    ["", "爱立信 汇总", "", "", "", "", 2700],
    ["杲某", "传输", 116, 86, 93, 179, 295],
    ["李某", "传输", 78, 92, 97, 189, 267],
    ["余某", "传输", 92, 96, 91, 187, 279],
    ["张某", "传输", 109, 118, 110, 228, 337],
    ["", "传输 汇总", "", "", "", "", 1178],
    ["高某", "干线", 453, 25, 15, 40, 493],
    ["马某", "干线", 542, 27, 28, 55, 597],
    ["孟某", "干线", 411, 33, 33, 66, 477],
    ["吴某", "干线", 283, 17, 18, 35, 318],
    ["", "干线 汇总", "", "", "", "", 1885],
    ["曹某", "接入", 166, 24, 26, 50, 216],
    ["狄某", "接入", 89, 21, 21, 42, 131],
    ["任某", "接入", 159, 24, 22, 46, 205],
    ["张某", "接入", 546, 44, 39, 83, 629],
    ["", "接入 汇总", "", "", "", "", 1181],
    ["常某", "数据", 1553, 24, 23, 47, 1600],
    ["王某", "数据", 682, 31, 33, 64, 746]
];
const titles = ["人员", "专业", "数据小计", "工程量1", "工程量2", "工程小计", "合计"];
const letters = "ABGHIJKLMNOPQRSTU".split("");
const sumColumns = [2, 5, 6];

document.getElementById("head").innerHTML =
    "<tr><th></th>" + letters.map(l => `<th>${l}</th>`).join("") + "</tr>";

function cell(value, col, isTitle) {
    let cls = ["box"];
    if (col === 0 && !isTitle) cls = ["name"];
    if (sumColumns.includes(col)) cls.push("sum");
    if (col === 2) cls.push("first-sum");
    if (col > 1 && !isTitle) cls.push("num");
    if (isTitle || String(value).includes("汇总")) cls.push("bold");
    return `<td class="${cls.join(" ")}">${value}</td>`;
}

const empty = "<td></td>".repeat(letters.length - titles.length);
document.getElementById("rows").innerHTML = [titles, ...data].map((row, i) =>
    `<tr class="${i === 4 ? "picked" : ""}"><th>${i + 1}</th>` +
    row.map((v, c) => cell(v, c, i === 0)).join("") + empty + "</tr>"
).join("");

// Outline gutter
document.getElementById("levelTwo").innerHTML =
    '<i></i><button class="toggle" aria-label="折叠"></button>'.repeat(4) + "<i></i>";
document.getElementById("dots").innerHTML = data.map(row =>
    row[0] ? "<i></i>" : '<i style="visibility:hidden"></i>'
).join("");

// QR code, 37 x 37 modules
const size = 37;
let seed = 20190614;
function random() {
    seed = (seed * 1103515245 + 12345) % 2147483648;
    return seed / 2147483648;
}
function square(x, y, cx, cy, rings) {
    const d = Math.max(Math.abs(x - cx), Math.abs(y - cy));
    return d > rings.length - 1 ? null : rings[d];
}
let path = "";
for (let y = 0; y < size; y++) {
    for (let x = 0; x < size; x++) {
        let dark = random() > 0.5;
        for (const [cx, cy] of [[3, 3], [33, 3], [3, 33]]) {
            const s = square(x, y, cx, cy, [1, 1, 0, 1, 0]);
            if (s !== null) dark = s === 1;
        }
        const a = square(x, y, 30, 30, [1, 0, 1]);
        if (a !== null) dark = a === 1;
        if (dark) path += `M${x} ${y}h1v1h-1z`;
    }
}
document.getElementById("qr").innerHTML = `<path d="${path}"/>`;
document.getElementById("qrStrip").innerHTML = `<path d="${path}"/>`;
```
